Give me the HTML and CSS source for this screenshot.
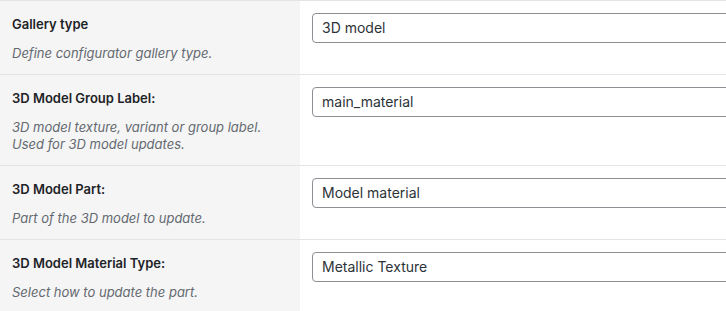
FILE: index.html
```html
<!DOCTYPE html>
<html>
<head>
<meta charset="utf-8">
<link rel="stylesheet" href="styles.css">
</head>
<body>
<div class="form">
  <div class="row">
    <div class="head">
      <div class="label">Gallery type</div>
      <div class="desc">Define configurator gallery type.</div>
    </div>
    <div class="field"><div class="input">3D model</div></div>
  </div>
  <div class="row">
    <div class="head">
      <div class="label">3D Model Group Label:</div>
      <div class="desc">3D model texture, variant or group label.<br>Used for 3D model updates.</div>
    </div>
    <div class="field"><div class="input">main_material</div></div>
  </div>
  <div class="row">
    <div class="head">
      <div class="label">3D Model Part:</div>
      <div class="desc">Part of the 3D model to update.</div>
    </div>
    <div class="field"><div class="input">Model material</div></div>
  </div>
  <div class="row">
    <div class="head">
      <div class="label">3D Model Material Type:</div>
      <div class="desc">Select how to update the part.</div>
    </div>
    <div class="field"><div class="input">Metallic Texture</div></div>
  </div>
</div>
</body>
</html>
```
FILE: styles.css
```css
html, body {
  margin: 0;
  padding: 0;
  background: #ffffff;
  overflow: hidden;
}
body {
  font-family: Inter, "Noto Sans", sans-serif;
  color: #1d2327;
}
.form {
  width: 726px;
}
.row {
  display: grid;
  grid-template-columns: 300px 1fr;
  border-top: 1px solid #e4e4e4;
}
.head {
  background: #f5f5f5;
  padding: 14px 12px 12px 12px;
}
.label {
  font-size: 13px;
  line-height: 18px;
  font-weight: 600;
  color: #1d2327;
}
.desc {
  margin-top: 12px;
  font-size: 13px;
  line-height: 17px;
  font-style: italic;
  color: #646970;
}
.field {
  padding: 12px 0 0 12px;
  overflow: hidden;
}
.input {
  box-sizing: border-box;
  width: 560px;
  height: 30px;
  border: 1px solid #8c8f94;
  border-radius: 4px;
  padding: 0 9px;
  font-size: 14px;
  line-height: 28px;
  color: #2c3338;
  background: #fff;
}
```
